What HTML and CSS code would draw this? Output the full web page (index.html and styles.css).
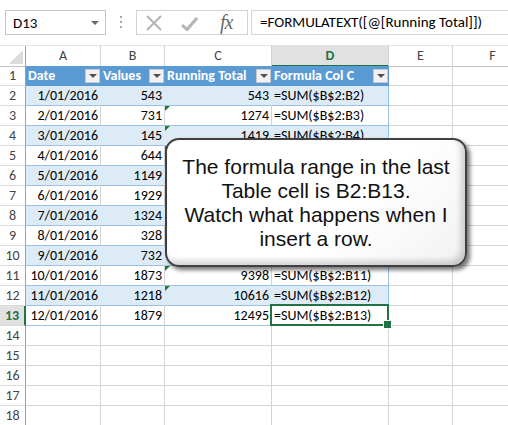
FILE: index.html
```html
<!DOCTYPE html>
<html lang="en">
<head>
    <meta charset="UTF-8">
    <title>Running Total - FORMULATEXT</title>
    <link rel="stylesheet" href="styles.css">
</head>
<body>
    <div class="formula-bar">
        <div class="name-box">
            <span>D13</span>
            <span class="caret"></span>
        </div>
        <div class="grip"><i></i><i></i><i></i></div>
        <div class="fx-buttons">
            <svg width="16" height="16" viewBox="0 0 16 16" class="btn-x">
                <path d="M1 1 L15 15 M15 1 L1 15" stroke="#b4b4b4" stroke-width="2" fill="none"/>
            </svg>
            <svg width="17" height="14" viewBox="0 0 17 14" class="btn-ok">
                <path d="M1 8 L6 12.5 L16 1" stroke="#b4b4b4" stroke-width="3" fill="none"/>
            </svg>
            <span class="fx">fx</span>
        </div>
        <div class="formula-input">=FORMULATEXT([@[Running Total]])</div>
    </div>

    <div class="sheet">
        <div class="row col-head">
            <div class="corner"><span></span></div>
            <div>A</div><div>B</div><div>C</div><div class="sel">D</div><div>E</div><div>F</div>
        </div>

        <div class="row tbl-head">
            <div class="rh">1</div>
            <div class="c t">Date<span class="dd"></span></div>
            <div class="c t">Values<span class="dd"></span></div>
            <div class="c t">Running Total<span class="dd"></span></div>
            <div class="c t last">Formula Col C<span class="dd"></span></div>
            <div class="c"></div><div class="c"></div>
        </div>

        <div class="row band">
            <div class="rh">2</div>
            <div class="c t num">1/01/2016</div><div class="c t num">543</div><div class="c t num">543</div><div class="c t last">=SUM($B$2:B2)</div>
            <div class="c"></div><div class="c"></div>
        </div>
        <div class="row plain">
            <div class="rh">3</div>
            <div class="c t num">2/01/2016</div><div class="c t num">731</div><div class="c t num flag">1274</div><div class="c t last">=SUM($B$2:B3)</div>
            <div class="c"></div><div class="c"></div>
        </div>
        <div class="row band">
            <div class="rh">4</div>
            <div class="c t num">3/01/2016</div><div class="c t num">145</div><div class="c t num flag">1419</div><div class="c t last">=SUM($B$2:B4)</div>
            <div class="c"></div><div class="c"></div>
        </div>
        <div class="row plain">
            <div class="rh">5</div>
            <div class="c t num">4/01/2016</div><div class="c t num">644</div><div class="c t num flag">2063</div><div class="c t last">=SUM($B$2:B5)</div>
            <div class="c"></div><div class="c"></div>
        </div>
        <div class="row band">
            <div class="rh">6</div>
            <div class="c t num">5/01/2016</div><div class="c t num">1149</div><div class="c t num flag">3212</div><div class="c t last">=SUM($B$2:B6)</div>
            <div class="c"></div><div class="c"></div>
        </div>
        <div class="row plain">
            <div class="rh">7</div>
            <div class="c t num">6/01/2016</div><div class="c t num">1929</div><div class="c t num flag">5141</div><div class="c t last">=SUM($B$2:B7)</div>
            <div class="c"></div><div class="c"></div>
        </div>
        <div class="row band">
            <div class="rh">8</div>
            <div class="c t num">7/01/2016</div><div class="c t num">1324</div><div class="c t num flag">6465</div><div class="c t last">=SUM($B$2:B8)</div>
            <div class="c"></div><div class="c"></div>
        </div>
        <div class="row plain">
            <div class="rh">9</div>
            <div class="c t num">8/01/2016</div><div class="c t num">328</div><div class="c t num flag">6793</div><div class="c t last">=SUM($B$2:B9)</div>
            <div class="c"></div><div class="c"></div>
        </div>
        <div class="row band">
            <div class="rh">10</div>
            <div class="c t num">9/01/2016</div><div class="c t num">732</div><div class="c t num flag">7525</div><div class="c t last">=SUM($B$2:B10)</div>
            <div class="c"></div><div class="c"></div>
        </div>
        <div class="row plain">
            <div class="rh">11</div>
            <div class="c t num">10/01/2016</div><div class="c t num">1873</div><div class="c t num flag">9398</div><div class="c t last">=SUM($B$2:B11)</div>
            <div class="c"></div><div class="c"></div>
        </div>
        <div class="row band">
            <div class="rh">12</div>
            <div class="c t num">11/01/2016</div><div class="c t num">1218</div><div class="c t num flag">10616</div><div class="c t last">=SUM($B$2:B12)</div>
            <div class="c"></div><div class="c"></div>
        </div>
        <div class="row plain">
            <div class="rh sel">13</div>
            <div class="c t num">12/01/2016</div><div class="c t num">1879</div><div class="c t num">12495</div><div class="c t last active">=SUM($B$2:B13)</div>
            <div class="c"></div><div class="c"></div>
        </div>

        <div class="row"><div class="rh">14</div><div class="c"></div><div class="c"></div><div class="c"></div><div class="c"></div><div class="c"></div><div class="c"></div></div>
        <div class="row"><div class="rh">15</div><div class="c"></div><div class="c"></div><div class="c"></div><div class="c"></div><div class="c"></div><div class="c"></div></div>
        <div class="row"><div class="rh">16</div><div class="c"></div><div class="c"></div><div class="c"></div><div class="c"></div><div class="c"></div><div class="c"></div></div>
        <div class="row"><div class="rh">17</div><div class="c"></div><div class="c"></div><div class="c"></div><div class="c"></div><div class="c"></div><div class="c"></div></div>
        <div class="row"><div class="rh">18</div><div class="c"></div><div class="c"></div><div class="c"></div><div class="c"></div><div class="c"></div><div class="c"></div></div>

        <div class="callout">
            <p>The formula range in the last<br>Table cell is B2:B13.<br>Watch what happens when I<br>insert a row.</p>
        </div>
    </div>
</body>
</html>
```

FILE: styles.css
```css
* {
    box-sizing: border-box;
}

body {
    margin: 0;
    background: #fff;
    font-family: Calibri, Carlito, Lato, sans-serif;
    font-size: 14px;
    color: #000;
    overflow: hidden;
}

/* formula bar */
.formula-bar {
    display: flex;
    align-items: flex-start;
    height: 45px;
    padding-top: 10px;
}

.name-box {
    display: flex;
    align-items: center;
    justify-content: space-between;
    margin-left: 5px;
    width: 101px;
    height: 25px;
    padding: 0 6px 0 7px;
    border: 1px solid #c6c6c6;
    font-size: 15px;
}

.caret {
    width: 0;
    height: 0;
    border-left: 4px solid transparent;
    border-right: 4px solid transparent;
    border-top: 4px solid #6a6a6a;
}

.grip {
    display: flex;
    flex-direction: column;
    gap: 3px;
    margin: 6px 14px 0 14px;
}

.grip i {
    display: block;
    width: 2px;
    height: 2px;
    background: #a8a8a8;
}

.fx-buttons {
    display: flex;
    align-items: center;
    width: 112px;
    height: 25px;
    border: 1px solid #d4d4d4;
    padding-left: 9px;
}

.btn-x {
    margin-right: 19px;
}

.btn-ok {
    margin-right: 22px;
    margin-top: 2px;
}

.fx {
    font-family: "Liberation Serif", serif;
    font-style: italic;
    font-size: 20px;
    color: #6a6a6a;
    letter-spacing: -1px;
}

.formula-input {
    flex: 1;
    height: 25px;
    margin-left: 3px;
    border: 1px solid #d4d4d4;
    border-right: none;
    padding: 2px 0 0 8px;
    font-size: 15px;
    white-space: nowrap;
}

/* grid */
.sheet {
    position: relative;
}

.row {
    display: grid;
    grid-template-columns: 26px 75px 64px 107px 117px 64px 80px;
    height: 20px;
}

.row > div {
    border-right: 1px solid #d4d4d4;
    border-bottom: 1px solid #d4d4d4;
    height: 20px;
    line-height: 20px;
    padding: 0 2px 0 2px;
    white-space: nowrap;
    overflow: hidden;
}

.col-head {
    height: 21px;
    border-top: 1px solid #e4e4e4;
}

.col-head > div {
    height: 21px;
    text-align: center;
    color: #444;
    border-bottom-color: #c4c4c4;
}

.col-head .corner {
    display: flex;
    align-items: flex-end;
    justify-content: flex-end;
    padding: 0 2px 2px 0;
    border-right-color: #9e9e9e;
}

.corner span {
    width: 0;
    height: 0;
    border-left: 14px solid transparent;
    border-bottom: 14px solid #dcdcdc;
}

.col-head .sel {
    background: #e1e1e1;
    color: #217346;
    font-weight: bold;
    border-bottom: 2px solid #217346;
}

.rh {
    text-align: center;
    color: #444;
    padding: 0 !important;
}

.row > .rh {
    border-right-color: #9e9e9e;
    border-bottom-color: #dadada;
}

.row > .rh.sel {
    background: #e1e1e1;
    color: #217346;
    font-weight: bold;
    border-right: 2px solid #217346;
}

.num {
    text-align: right;
}

/* table styling */
.tbl-head > .t {
    display: flex;
    align-items: center;
    justify-content: space-between;
    background: #5b9bd5;
    color: #fff;
    font-weight: bold;
    border-right-color: #5b9bd5;
    border-bottom-color: #5b9bd5;
    padding-right: 0;
}

.dd {
    display: flex;
    align-items: center;
    justify-content: center;
    flex-shrink: 0;
    width: 15px;
    height: 14px;
    margin-top: 1px;
    background: #f2f2f2;
    border: 1px solid #c8c8c8;
}

.dd::after {
    content: "";
    border-left: 4px solid transparent;
    border-right: 4px solid transparent;
    border-top: 4px solid #505050;
}

.band > .t {
    background: #ddebf7;
    border-right-color: #ddebf7;
    border-bottom-color: #9bc2e6;
}

.plain > .t {
    border-bottom-color: #9bc2e6;
}

.row > .t.last {
    border-right-color: #9bc2e6;
}

.tbl-head > .t.last {
    border-right-color: #5b9bd5;
}

.flag {
    position: relative;
}

.flag::before {
    content: "";
    position: absolute;
    top: 0;
    left: 0;
    border-top: 5px solid #1e7b24;
    border-right: 5px solid transparent;
}

.active {
    position: relative;
    overflow: visible !important;
}

.active::after {
    content: "";
    position: absolute;
    top: -2px;
    left: -2px;
    right: -1px;
    bottom: -1px;
    border: 2px solid #217346;
}

.active::before {
    content: "";
    position: absolute;
    right: -4px;
    bottom: -4px;
    width: 7px;
    height: 7px;
    background: #217346;
    border: 1px solid #fff;
    z-index: 2;
}

/* callout */
.callout {
    position: absolute;
    left: 165px;
    top: 93px;
    width: 302px;
    height: 129px;
    display: flex;
    align-items: center;
    justify-content: center;
    background: linear-gradient(135deg, #ffffff 60%, #f2f2f2);
    border: 2px solid #404040;
    border-radius: 14px;
    box-shadow: 3px 3px 4px rgba(0, 0, 0, 0.55), inset -4px -4px 6px rgba(0, 0, 0, 0.18);
    z-index: 5;
}

.callout p {
    margin: 0;
    font-family: "Liberation Sans", Arial, sans-serif;
    font-size: 21px;
    line-height: 24px;
    text-align: center;
    color: #111;
}
```
